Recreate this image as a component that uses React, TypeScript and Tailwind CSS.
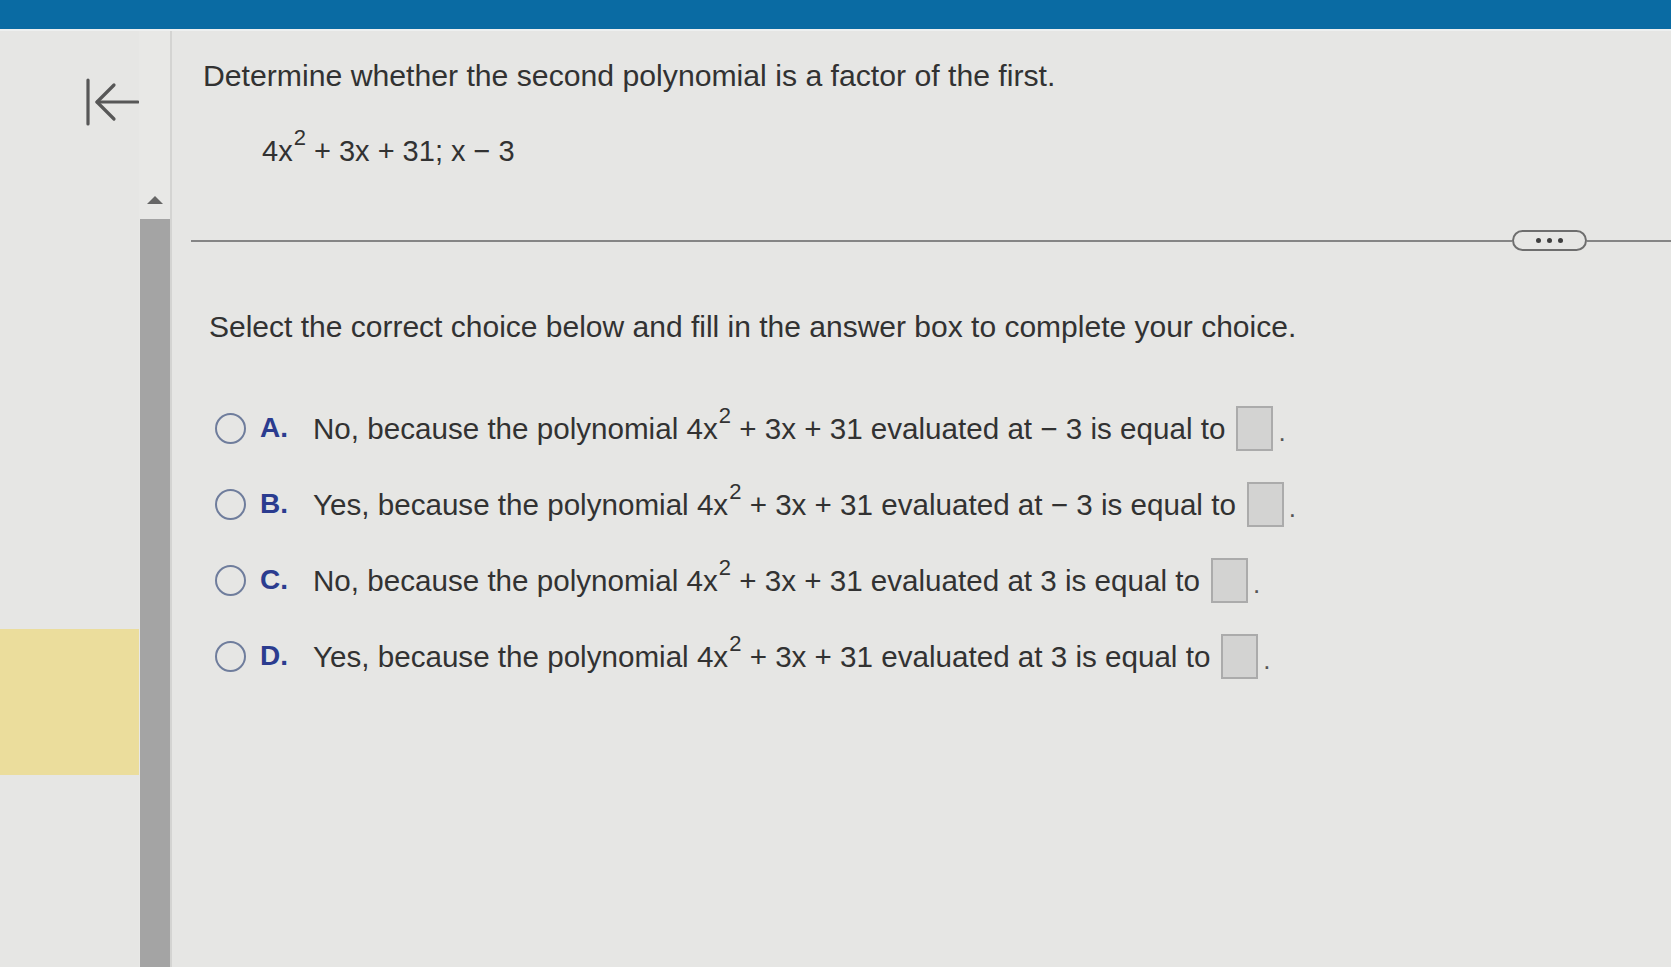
import React from "react";

const choices = [
  { id: "A", lead: "No", at: "\u2212 3" },
  { id: "B", lead: "Yes", at: "\u2212 3" },
  { id: "C", lead: "No", at: "3" },
  { id: "D", lead: "Yes", at: "3" },
];

const Poly = () => (
  <span>
    4x<sup className="text-[22px] top-[-0.72em] ml-[1px]">2</sup> + 3x + 31
  </span>
);

const BackIcon = () => (
  <svg width="56" height="48" viewBox="0 0 56 48" fill="none" stroke="#575757" strokeWidth="3.2" strokeLinecap="round" strokeLinejoin="round">
    <line x1="4" y1="2" x2="4" y2="46" />
    <line x1="13" y1="24" x2="54" y2="24" />
    <polyline points="30,7 13,24 30,41" />
  </svg>
);

export default function App() {
  return (
    <div
      className="h-screen w-full overflow-hidden flex flex-col bg-[#e5e5e3] text-[#323232]"
      style={{ fontFamily: '"Liberation Sans", Arial, sans-serif' }}
    >
      <div className="h-[31px] shrink-0 bg-[#0a6ba3] border-b-2 border-[#eef0f0]" />
      <div className="flex flex-1">
        {/* left sidebar */}
        <div className="w-[139px] shrink-0 flex flex-col bg-[#e6e6e4]">
          <div className="mt-[47px] ml-[84px]">
            <BackIcon />
          </div>
          <div className="mt-[503px] h-[146px] bg-[#ebdd9c]" />
        </div>
        {/* scrollbar */}
        <div className="w-[31px] shrink-0 flex flex-col items-center bg-[#e8e8e6]">
          <div className="mt-[165px] w-0 h-0 border-l-[8px] border-r-[8px] border-b-[8px] border-l-transparent border-r-transparent border-b-[#666]" />
          <div className="mt-[15px] w-[30px] flex-1 bg-[#a4a4a4]" />
        </div>
        {/* main panel */}
        <main className="flex-1 border-l-2 border-[#d4d4d2] bg-[#e6e6e4]">
          <div className="pt-[30px] pl-[31px] text-[30.2px] leading-[30px]">
            Determine whether the second polynomial is a factor of the first.
          </div>
          <div className="mt-[46px] pl-[90px] text-[29px] leading-[29px]">
            <Poly />; x {"\u2212"} 3
          </div>
          <div className="mt-[64px] pl-[19px] flex items-center">
            <div className="flex-1 h-[2px] bg-[#858585]" />
            <div className="w-[75px] h-[21px] shrink-0 rounded-full border-2 border-[#6e6e6e] flex items-center justify-center gap-[6px]">
              <span className="w-[5px] h-[5px] rounded-full bg-[#3f3f3f]" />
              <span className="w-[5px] h-[5px] rounded-full bg-[#3f3f3f]" />
              <span className="w-[5px] h-[5px] rounded-full bg-[#3f3f3f]" />
            </div>
            <div className="w-[84px] h-[2px] bg-[#858585]" />
          </div>
          <div className="mt-[61px] pl-[37px] text-[30px] leading-[30px]">
            Select the correct choice below and fill in the answer box to complete your choice.
          </div>
          <div className="mt-[48px] pl-[43px] flex flex-col">
            {choices.map((c) => (
              <div key={c.id} className="h-[76px] flex items-center">
                <span className="w-[31px] h-[31px] rounded-full border-[2.5px] border-[#6f7d9c] shrink-0" />
                <span className="ml-[14px] w-[53px] font-bold text-[28px] text-[#2b3c8f]">{c.id}.</span>
                <span className="text-[29.6px] leading-[29px] whitespace-nowrap">
                  {c.lead}, because the polynomial <Poly /> evaluated at {c.at} is equal to
                </span>
                <span className="ml-[11px] w-[37px] h-[45px] shrink-0 bg-[#d3d3d2] border-2 border-[#ababab]" />
                <span className="ml-[5px] text-[26px] self-end mb-[14px] text-[#555]">.</span>
              </div>
            ))}
          </div>
        </main>
      </div>
    </div>
  );
}
